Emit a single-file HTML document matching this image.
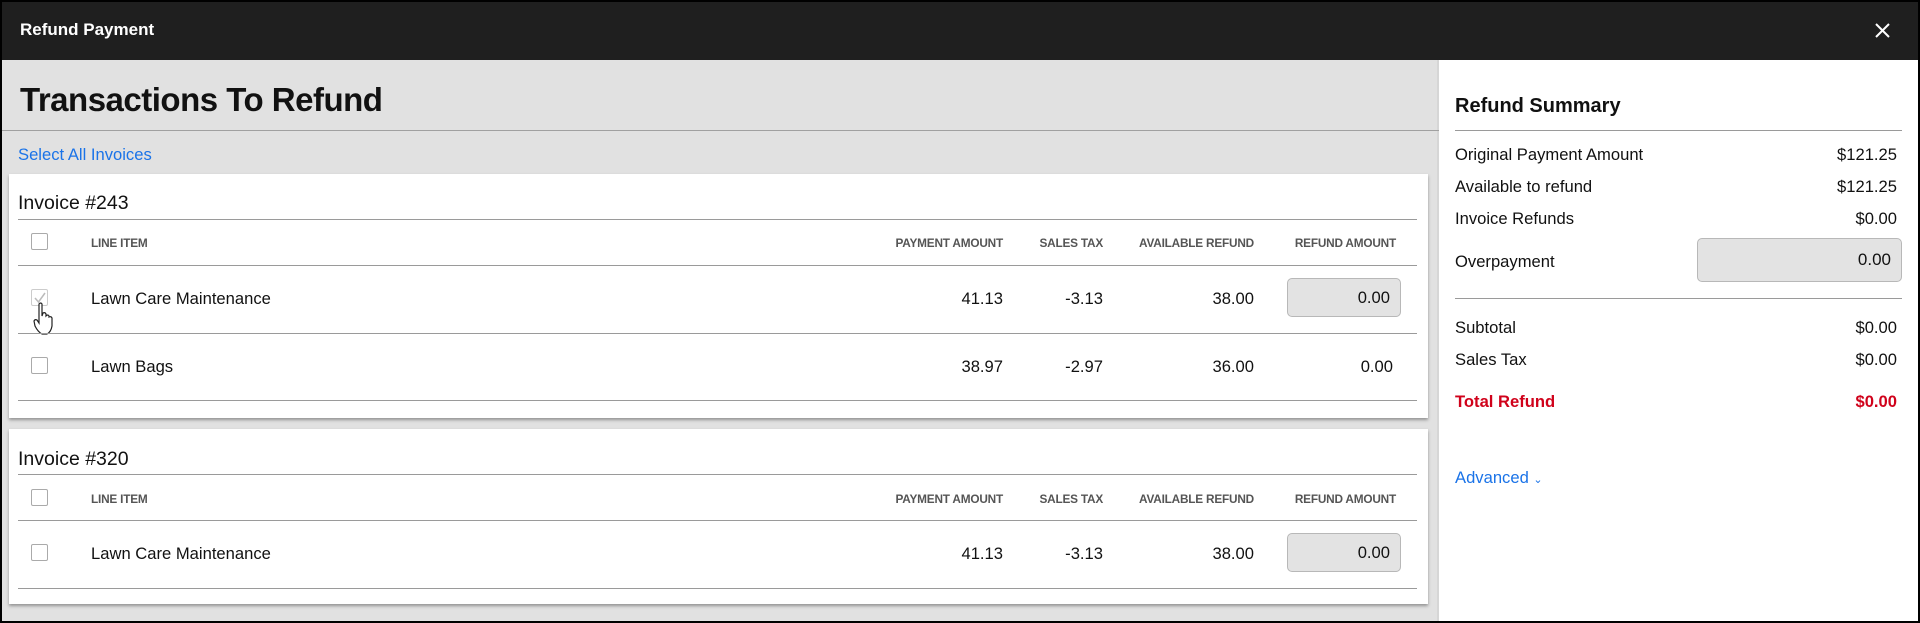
<!DOCTYPE html>
<html><head><meta charset="utf-8"><style>
*{box-sizing:border-box;margin:0;padding:0}
body{width:1920px;height:623px;background:#fff;font-family:"Liberation Sans",sans-serif;color:#111;position:relative;overflow:hidden}
.a{position:absolute;white-space:nowrap}
.frame{position:absolute;left:0;top:0;width:1920px;height:623px;border:2px solid #000;pointer-events:none}
.hdr{position:absolute;left:0;top:0;width:1920px;height:60px;background:#1f1f1f}
.left{position:absolute;left:2px;top:60px;width:1437px;height:563px;background:#e1e1e1;border-right:2px solid #d6d6d6}
.card{position:absolute;left:9px;width:1419px;background:#fff;box-shadow:0 2px 3px rgba(0,0,0,.35)}
.hl{position:absolute;height:1px;background:#9a9a9a}
.cb{position:absolute;width:17px;height:17px;border:1.5px solid #aaa;border-radius:2px;background:#fff}
.th{font-size:11.8px;font-weight:bold;color:#555;letter-spacing:-.2px}
.t{font-size:16.6px;color:#111}
.inp{position:absolute;background:#e3e3e3;border:1px solid #b8b8b8;border-radius:5px;font-size:16.6px;text-align:right;padding-right:10px}
.v{font-size:16.6px;right:23px}
</style></head><body>
<div class="hdr"></div>
<div class="a" style="left:20px;top:20px;color:#fff;font-weight:bold;font-size:17px">Refund Payment</div>
<svg class="a" style="left:1875px;top:23px" width="15" height="15" viewBox="0 0 15 15"><path d="M1 1L14 14M14 1L1 14" stroke="#fff" stroke-width="2"/></svg>
<div class="left"></div>
<div class="a" style="left:20px;top:81px;font-size:33px;font-weight:bold;letter-spacing:-.5px">Transactions To Refund</div>
<div class="hl" style="left:2px;top:130px;width:1437px;background:#a0a0a0"></div>
<div class="a" style="left:18px;top:145px;font-size:16.6px;color:#1a73e8">Select All Invoices</div>

<div class="card" style="top:174px;height:244px"></div>
<div class="a" style="left:18px;top:192px;font-size:19.5px">Invoice #243</div>
<div class="hl" style="left:18px;top:219px;width:1399px"></div>
<div class="cb" style="left:31px;top:233px"></div>
<div class="a th" style="left:91px;top:236px">LINE ITEM</div>
<div class="a th" style="right:917px;top:236px">PAYMENT AMOUNT</div>
<div class="a th" style="right:817px;top:236px">SALES TAX</div>
<div class="a th" style="right:666px;top:236px">AVAILABLE REFUND</div>
<div class="a th" style="right:524px;top:236px">REFUND AMOUNT</div>
<div class="hl" style="left:18px;top:265px;width:1399px"></div>
<div class="cb" style="left:31px;top:289px;border-color:#ccc"></div>
<svg class="a" style="left:33px;top:291px" width="14" height="14"><path d="M2 7L5.5 11L12 2" stroke="#bbb" stroke-width="1.5" fill="none"/></svg>
<svg class="a" style="left:33px;top:302px" width="24" height="34" viewBox="0 0 24 34"><path d="M6 2Q8 0 9 2V14L10 11Q12 10 13 12V14Q15 12 16 14V15Q18 14 19 16V24Q18 30 14 32H9Q5 30 2 24L1 19Q2 17 4 18L6 21Z" fill="#fff" stroke="#222" stroke-width="1.2"/></svg>
<div class="a t" style="left:91px;top:289px">Lawn Care Maintenance</div>
<div class="a t" style="right:917px;top:289px">41.13</div>
<div class="a t" style="right:817px;top:289px">-3.13</div>
<div class="a t" style="right:666px;top:289px">38.00</div>
<div class="inp" style="left:1287px;top:278px;width:114px;height:39px;line-height:38px">0.00</div>
<div class="hl" style="left:18px;top:333px;width:1399px"></div>
<div class="cb" style="left:31px;top:357px"></div>
<div class="a t" style="left:91px;top:357px">Lawn Bags</div>
<div class="a t" style="right:917px;top:357px">38.97</div>
<div class="a t" style="right:817px;top:357px">-2.97</div>
<div class="a t" style="right:666px;top:357px">36.00</div>
<div class="a t" style="right:527px;top:357px">0.00</div>
<div class="hl" style="left:18px;top:400px;width:1399px"></div>

<div class="card" style="top:429px;height:175px"></div>
<div class="a" style="left:18px;top:448px;font-size:19.5px">Invoice #320</div>
<div class="hl" style="left:18px;top:474px;width:1399px"></div>
<div class="cb" style="left:31px;top:489px"></div>
<div class="a th" style="left:91px;top:492px">LINE ITEM</div>
<div class="a th" style="right:917px;top:492px">PAYMENT AMOUNT</div>
<div class="a th" style="right:817px;top:492px">SALES TAX</div>
<div class="a th" style="right:666px;top:492px">AVAILABLE REFUND</div>
<div class="a th" style="right:524px;top:492px">REFUND AMOUNT</div>
<div class="hl" style="left:18px;top:520px;width:1399px"></div>
<div class="cb" style="left:31px;top:544px"></div>
<div class="a t" style="left:91px;top:544px">Lawn Care Maintenance</div>
<div class="a t" style="right:917px;top:544px">41.13</div>
<div class="a t" style="right:817px;top:544px">-3.13</div>
<div class="a t" style="right:666px;top:544px">38.00</div>
<div class="inp" style="left:1287px;top:533px;width:114px;height:39px;line-height:38px">0.00</div>
<div class="hl" style="left:18px;top:588px;width:1399px"></div>

<div class="a" style="left:1455px;top:95px;font-size:20px;font-weight:bold">Refund Summary</div>
<div class="hl" style="left:1455px;top:130px;width:447px"></div>
<div class="a t" style="left:1455px;top:145px">Original Payment Amount</div><div class="a v" style="top:145px">$121.25</div>
<div class="a t" style="left:1455px;top:177px">Available to refund</div><div class="a v" style="top:177px">$121.25</div>
<div class="a t" style="left:1455px;top:209px">Invoice Refunds</div><div class="a v" style="top:209px">$0.00</div>
<div class="a t" style="left:1455px;top:252px">Overpayment</div>
<div class="inp" style="left:1697px;top:238px;width:205px;height:44px;line-height:42px;font-size:17px">0.00</div>
<div class="hl" style="left:1455px;top:298px;width:447px"></div>
<div class="a t" style="left:1455px;top:318px">Subtotal</div><div class="a v" style="top:318px">$0.00</div>
<div class="a t" style="left:1455px;top:350px">Sales Tax</div><div class="a v" style="top:350px">$0.00</div>
<div class="a" style="left:1455px;top:392px;font-size:16.6px;font-weight:bold;color:#d0021b">Total Refund</div>
<div class="a v" style="top:392px;font-weight:bold;color:#d0021b">$0.00</div>
<div class="a" style="left:1455px;top:468px;font-size:16.6px;color:#1a73e8">Advanced <span style="font-size:11px">&#8964;</span></div>
<div class="frame"></div>
</body></html>
